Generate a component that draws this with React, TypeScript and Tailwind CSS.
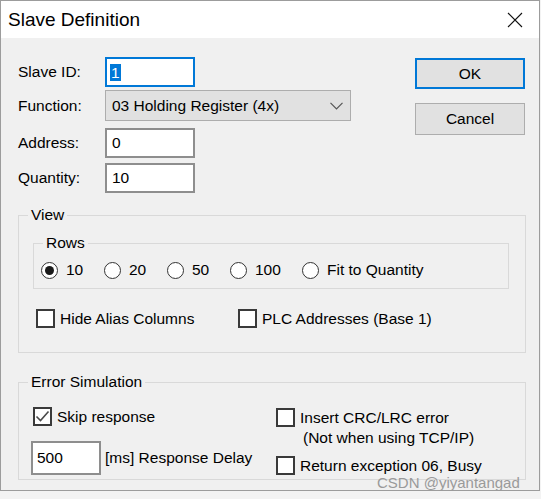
import React from "react"

const font = "font-['Liberation_Sans',Arial,sans-serif]"

function Radio({ checked, label, w }: { checked?: boolean; label: string; w?: string }) {
  return (
    <div className={`flex items-center gap-[8px] ${w ?? ""}`}>
      <span className="w-[17px] h-[17px] rounded-full border border-[#333] bg-white flex items-center justify-center shrink-0">
        {checked && <span className="w-[9px] h-[9px] rounded-full bg-[#1a1a1a]" />}
      </span>
      <span className="leading-[18px]">{label}</span>
    </div>
  )
}

function Check({ checked }: { checked?: boolean }) {
  return (
    <span className="w-[19px] h-[19px] border-2 border-[#3a3a3a] bg-white shrink-0 flex items-center justify-center">
      {checked && (
        <svg width="15" height="15" viewBox="0 0 15 15">
          <path d="M1.5 7.5 L5.5 11.5 L13.5 2.5" fill="none" stroke="#4a4a4a" strokeWidth="1.6" />
        </svg>
      )}
    </span>
  )
}

function Field({ value, selected }: { value: string; selected?: boolean }) {
  return (
    <div
      className={`w-[90px] h-[30px] bg-white flex items-center pl-[3px] ${
        selected ? "border-2 border-[#0078d7]" : "border-2 border-[#8e8e8e] pl-[5px]"
      }`}
    >
      {selected ? (
        <span className="bg-[#0078d7] text-white leading-[17px] px-[1px]">{value}</span>
      ) : (
        <span className="leading-[18px]">{value}</span>
      )}
    </div>
  )
}

export default function App() {
  return (
    <div className={`w-[541px] h-[499px] bg-[#f3f3f3] relative overflow-hidden text-black text-[15.5px] ${font}`}>
      <div className="w-[540px] h-[491px] border border-[#9c9c9c] bg-[#f0f0f0] flex flex-col">
        {/* title bar */}
        <div className="h-[37px] bg-white flex items-center justify-between pl-[7px] pr-[16px] shrink-0">
          <span className="text-[19px] leading-[22px]">Slave Definition</span>
          <svg width="16" height="16" viewBox="0 0 16 16">
            <path d="M1 1 L15 15 M15 1 L1 15" stroke="#111" strokeWidth="1.1" />
          </svg>
        </div>

        <div className="pl-[17px] pr-[14px]">
          {/* top section */}
          <div className="flex justify-between">
            <div className="pt-[19px] flex flex-col">
              <div className="flex items-center">
                <span className="w-[87px]">Slave ID:</span>
                <Field value="1" selected />
              </div>
              <div className="flex items-center mt-[3px]">
                <span className="w-[87px]">Function:</span>
                <div className="w-[246px] h-[31px] bg-[#e1e1e1] border border-[#adadad] flex items-center justify-between pl-[6px] pr-[7px]">
                  <span>03 Holding Register (4x)</span>
                  <svg width="13" height="8" viewBox="0 0 13 8">
                    <path d="M0.5 0.8 L6.5 6.8 L12.5 0.8" fill="none" stroke="#555" strokeWidth="1.2" />
                  </svg>
                </div>
              </div>
              <div className="flex items-center mt-[7px]">
                <span className="w-[87px]">Address:</span>
                <Field value="0" />
              </div>
              <div className="flex items-center mt-[5px]">
                <span className="w-[87px]">Quantity:</span>
                <Field value="10" />
              </div>
            </div>
            <div className="flex flex-col pt-[20px]">
              <button className="w-[110px] h-[31px] bg-[#e1e1e1] border-2 border-[#0078d7] flex items-center justify-center">
                OK
              </button>
              <button className="w-[110px] h-[32px] mt-[14px] bg-[#e1e1e1] border border-[#adadad] flex items-center justify-center">
                Cancel
              </button>
            </div>
          </div>

          {/* View group */}
          <fieldset className="mt-[13px] w-[508px] border border-[#d9d9d9] p-0 m-0">
            <legend className="ml-[9px] px-[3px] leading-[18px]">View</legend>
            <div className="px-[14px] pt-[10px] pb-[22px]">
              <fieldset className="w-[476px] border border-[#d9d9d9] p-0 m-0">
                <legend className="ml-[9px] px-[3px] leading-[18px]">Rows</legend>
                <div className="flex items-center pl-[7px] pt-[9px] pb-[9px]">
                  <Radio checked label="10" w="w-[63px]" />
                  <Radio label="20" w="w-[63px]" />
                  <Radio label="50" w="w-[63px]" />
                  <Radio label="100" w="w-[72px]" />
                  <Radio label="Fit to Quantity" />
                </div>
              </fieldset>
              <div className="flex items-center mt-[18px] pl-[3px]">
                <div className="flex items-center gap-[5px] w-[202px]">
                  <Check />
                  <span>Hide Alias Columns</span>
                </div>
                <div className="flex items-center gap-[5px]">
                  <Check />
                  <span>PLC Addresses (Base 1)</span>
                </div>
              </div>
            </div>
          </fieldset>

          {/* Error Simulation group */}
          <fieldset className="mt-[20px] w-[508px] border border-[#d9d9d9] p-0 m-0">
            <legend className="ml-[9px] px-[3px] leading-[18px]">Error Simulation</legend>
            <div className="flex pt-[14px] pb-[1px]">
              <div className="w-[257px] pl-[12px] flex flex-col">
                <div className="flex items-center gap-[5px] ml-[2px]">
                  <Check checked />
                  <span>Skip response</span>
                </div>
                <div className="flex items-center gap-[4px] mt-[12px]">
                  <div className="w-[70px] h-[34px] bg-white border-2 border-[#8e8e8e] flex items-center pl-[4px]">500</div>
                  <span>[ms] Response Delay</span>
                </div>
              </div>
              <div className="flex flex-col pt-[3px]">
                <div className="flex items-start gap-[5px]">
                  <Check />
                  <div className="flex flex-col leading-[20px]">
                    <span>Insert CRC/LRC error</span>
                    <span className="pl-[3px]">(Not when using TCP/IP)</span>
                  </div>
                </div>
                <div className="flex items-center gap-[5px] mt-[6px]">
                  <Check />
                  <span>Return exception 06, Busy</span>
                </div>
              </div>
            </div>
          </fieldset>
        </div>
      </div>
      <span className="absolute left-[377px] top-[474px] text-[15px] leading-[18px] text-[#9a9a9a]">CSDN @yiyantangad</span>
    </div>
  )
}
